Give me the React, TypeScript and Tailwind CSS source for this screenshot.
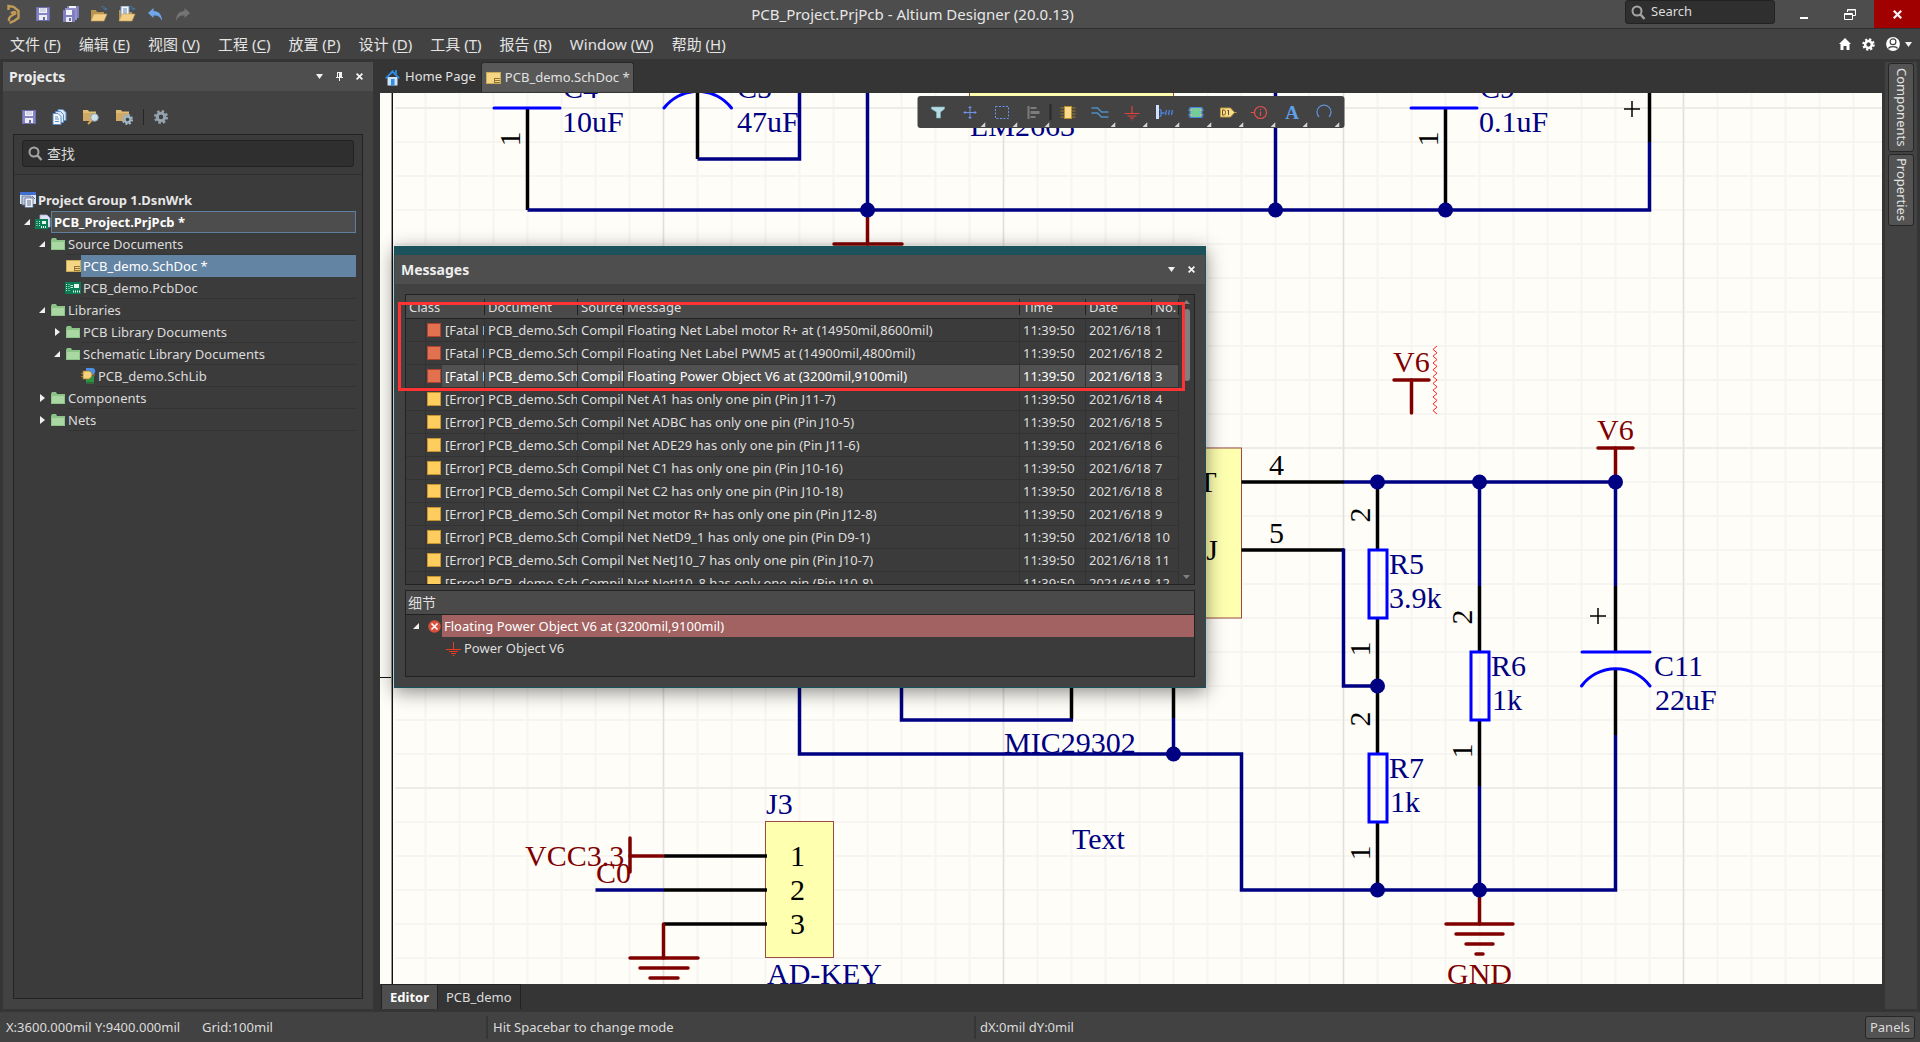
import React from "react";

const NAVY = "#000082";
const BLUE = "#0000ff";
const MAROON = "#800000";

/* ---------- small icons ---------- */

function FloppyIcon() {
  return (
    <svg width="14" height="14" viewBox="0 0 14 14">
      <rect width="14" height="14" fill="#8585c4" />
      <rect x="3" y="0" width="8" height="6" fill="#f3f3fa" />
      <path d="M4 2h6M4 4h6" stroke="#b9b9d8" />
      <rect x="3" y="8" width="8" height="6" fill="#ececf6" />
      <rect x="7" y="10" width="2" height="3" fill="#6a6aa8" />
      <rect x="0.5" y="0.5" width="13" height="13" fill="none" stroke="#6f6fb0" />
    </svg>
  );
}

function FloppiesIcon() {
  return (
    <svg width="16" height="16" viewBox="0 0 16 16">
      <rect x="4" y="0" width="12" height="12" fill="#7d7dbd" />
      <rect x="6" y="0" width="7" height="4" fill="#f3f3fa" />
      <rect x="2" y="2" width="12" height="12" fill="#9292cc" />
      <rect x="0" y="4" width="12" height="12" fill="#8080c0" />
      <rect x="3" y="4" width="6" height="5" fill="#f3f3fa" />
      <rect x="3" y="11" width="6" height="5" fill="#ececf6" />
      <rect x="6" y="12" width="2" height="3" fill="#6a6aa8" />
    </svg>
  );
}

function OpenFolderIcon({ doc = false }: { doc?: boolean }) {
  return (
    <svg width="18" height="16" viewBox="0 0 18 16">
      <path d="M1 4h5l1 2h7v9H1z" fill="#b99350" />
      {doc && (
        <g>
          <rect x="3" y="0" width="8" height="11" fill="#f2f5fa" stroke="#7b98bd" />
          <path d="M5 3h4M5 5h4M5 7h4" stroke="#5f86b5" />
        </g>
      )}
      <path d="M4 8h13l-3 7H1z" fill="#f3cf85" stroke="#c79e55" strokeWidth="0.6" />
      <path d="M11 1.500c2-1.500 4-1 4.500 2M13.500 2.500l2 1.500 1.500-2" fill="none" stroke="#3f7fae" strokeWidth="1" />
    </svg>
  );
}

function ArrowIcon({ flip = false, color }: { flip?: boolean; color: string }) {
  return (
    <svg width="16" height="13" viewBox="0 0 16 13">
      <path
        d={flip ? "M15 5L9.500 0v3C4 3 1 7 1 13c1.500-4 4-6 8.500-5.500V10z" : "M1 5L6.500 0v3C12 3 15 7 15 13c-1.500-4-4-6-8.500-5.500V10z"}
        fill={color}
      />
    </svg>
  );
}

function AltiumLogo() {
  return (
    <svg width="15" height="20" viewBox="0 0 15 20" fill="none" stroke="#c09b57" strokeWidth="2.400">
      <path d="M2.500 6V2l5 .8 5 4v7l-4 3-5 2" />
      <path d="M5 9.500c2-2 4.500-2 4.500-.5 0 2-5 1.500-6.500 5.500v2.500" />
    </svg>
  );
}

function SearchGlyph() {
  return (
    <svg width="15" height="15" viewBox="0 0 15 15" fill="none" stroke="#a5a5a5">
      <circle cx="6" cy="6" r="4.500" strokeWidth="2" />
      <path d="M9.500 9.500l4 4.500" strokeWidth="2.500" />
    </svg>
  );
}

function DocsIcon() {
  return (
    <svg width="15" height="16" viewBox="0 0 15 16">
      <path d="M6 .5h5l3 3v8H6z" fill="#dbe9f7" stroke="#5b8fc4" />
      <path d="M3.500 2.500h5l3 3v8h-8z" fill="#dbe9f7" stroke="#5b8fc4" />
      <path d="M1 4.500h5l3 3v8H1z" fill="#f4f8fc" stroke="#5b8fc4" />
      <path d="M3 8h3M3 10h4M3 12.500h4" stroke="#5b8fc4" />
    </svg>
  );
}

function GearShape({ cx, cy, r, color, hole }: { cx: number; cy: number; r: number; color: string; hole: string }) {
  return (
    <g>
      <circle cx={cx} cy={cy} r={r} fill="none" stroke={color} strokeWidth={r * 0.5} strokeDasharray={`${r * 0.42} ${r * 0.365}`} />
      <circle cx={cx} cy={cy} r={r * 0.66} fill="none" stroke={color} strokeWidth={r * 0.55} />
      <circle cx={cx} cy={cy} r={r * 0.38} fill={hole} />
    </g>
  );
}

function FolderToolIcon({ kind }: { kind: "search" | "gear" }) {
  return (
    <svg width="17" height="16" viewBox="0 0 17 16">
      <path d="M0 1h5l1 1.500h7V12H0z" fill="#e0bd74" />
      <path d="M0 4h13v8H0z" fill="#cfa965" />
      {kind === "search" ? (
        <g>
          <path d="M9 11l-4 4" stroke="#d8a650" strokeWidth="2" />
          <circle cx="11.500" cy="8.500" r="3.800" fill="#cfe0ea" stroke="#8ba6b6" />
        </g>
      ) : (
        <GearShape cx={11.5} cy={10.5} r={4.5} color="#9fb4c4" hole="#424242" />
      )}
    </svg>
  );
}

function HomePageIcon() {
  return (
    <svg width="15" height="17" viewBox="0 0 15 17">
      <rect x="10" y="1" width="2" height="4" fill="#2b7fd0" />
      <path d="M2.500 8h10v8.500h-10z" fill="#cfe4f7" />
      <path d="M0 9L7.500 1 15 9l-1.500.8L7.500 4 1.500 9.800z" fill="#2f8fe8" />
      <rect x="6" y="10" width="3.500" height="6.500" fill="#2f8fe8" />
    </svg>
  );
}

function SchDocIcon() {
  return (
    <svg width="15" height="12" viewBox="0 0 15 12">
      <rect x="0.500" y="0.500" width="14" height="11" fill="#f5d684" stroke="#cda95a" />
      <path d="M8 6.500h6M8 8.500h6M8 10.500h6" stroke="#8f7434" />
      <path d="M8.500 6v5" stroke="#8f7434" />
    </svg>
  );
}

function PcbDocIcon() {
  return (
    <svg width="16" height="12" viewBox="0 0 16 12">
      <rect width="16" height="12" fill="#0a7d55" />
      <path d="M1.500 2v8M4 2v8" stroke="#bff0d8" strokeWidth="1" strokeDasharray="1 1" />
      <path d="M5.500 3.500H8M5.500 5.500H8" stroke="#bff0d8" />
      <rect x="9" y="2" width="5" height="4" fill="#e6f7ef" />
      <path d="M8 9.500h7" stroke="#e6f7ef" strokeWidth="2" strokeDasharray="1 1" />
    </svg>
  );
}

function ProjectIcon() {
  return (
    <svg width="16" height="16" viewBox="0 0 16 16">
      <path d="M5 1h7l3 3v9H5z" fill="#dfe3f3" stroke="#a7aed0" strokeWidth="0.8" />
      <rect x="0" y="5" width="13" height="10" fill="#0a7d55" />
      <path d="M2 7v6M4.500 7v6" stroke="#bff0d8" strokeDasharray="1 1" />
      <rect x="7" y="7" width="4" height="3" fill="#e6f7ef" />
      <path d="M6 13h6" stroke="#e6f7ef" strokeWidth="2" strokeDasharray="1 1" />
    </svg>
  );
}

function GroupIcon() {
  return (
    <svg width="16" height="16" viewBox="0 0 16 16">
      <rect width="16" height="12" fill="#dfe6f2" />
      <rect width="16" height="3" fill="#3f6fd0" />
      <path d="M2 4h9v9H2z" fill="#b8c6dc" stroke="#5d6f92" strokeWidth="0.8" />
      <path d="M5 6h8v9.500H5z" fill="#eef2f8" stroke="#5d6f92" strokeWidth="0.8" />
      <path d="M7 9h4M7 11h4M7 13h4M12 4l3 3" stroke="#5d6f92" />
    </svg>
  );
}

function FolderIcon() {
  return (
    <svg width="14" height="12" viewBox="0 0 14 12">
      <path d="M0 2l1-2h4l1 2h8v10H0z" fill="#8cc487" />
      <path d="M1 4h12v7H1z" fill="#a9d8a2" />
    </svg>
  );
}

function SchLibIcon() {
  return (
    <svg width="15" height="16" viewBox="0 0 15 16">
      <path d="M5 0h7c3 1 3 5 0 7H5z" fill="#4b8fe6" />
      <path d="M5 8h8v6H5z" fill="#2f9440" />
      <path d="M6 14v2M8 14v2M10 14v2M12 14v2" stroke="#2f9440" />
      <path d="M0 5.500h3M0 8.500h3M10 7h4" stroke="#a07a2b" />
      <path d="M2 3h6c4 1 4 6 0 8H2z" fill="#f5d27b" stroke="#a07a2b" strokeWidth="0.8" />
    </svg>
  );
}

function Caret({ open }: { open: boolean }) {
  return open ? (
    <svg width="6" height="6" viewBox="0 0 6 6">
      <path d="M6 0v6H0z" fill="#f0f0f0" />
    </svg>
  ) : (
    <svg width="5" height="8" viewBox="0 0 5 8">
      <path d="M0 0l5 4-5 4z" fill="#f0f0f0" />
    </svg>
  );
}

function DownTri() {
  return (
    <svg width="7" height="5" viewBox="0 0 7 5">
      <path d="M0 0h7L3.500 5z" fill="#f2f2f2" />
    </svg>
  );
}

function CrossIcon({ size = 7 }: { size?: number }) {
  return (
    <svg width={size} height={size} viewBox="0 0 8 8" stroke="#f5f5f5" strokeWidth="2">
      <path d="M.7.7l6.600 6.600M7.300.7L.7 7.300" />
    </svg>
  );
}

function PinIcon() {
  return (
    <svg width="7" height="9" viewBox="0 0 7 9">
      <path d="M1 0h5v5h1v1H0V5h1z" fill="#f2f2f2" />
      <path d="M3.500 6v3" stroke="#f2f2f2" />
      <path d="M2.500 1v4" stroke="#4e4e4e" />
    </svg>
  );
}

/* ---------- header ---------- */

const QUICK_ACTIONS: { name: string; icon: React.ReactNode }[] = [
  { name: "Save", icon: <FloppyIcon /> },
  { name: "Save all", icon: <FloppiesIcon /> },
  { name: "Open", icon: <OpenFolderIcon /> },
  { name: "Open project", icon: <OpenFolderIcon doc /> },
  { name: "Undo", icon: <ArrowIcon color="#6ea6ea" /> },
  { name: "Redo", icon: <ArrowIcon flip color="#747474" /> },
];

function TitleBar() {
  return (
    <header className="flex h-[29px] shrink-0 items-center border-b border-[#2f2f2f] bg-[#4d4d4d] pl-[6px]">
      <div className="flex w-[194px] items-center">
        <AltiumLogo />
        <div className="ml-2 flex">
          {QUICK_ACTIONS.map((a) => (
            <button key={a.name} aria-label={a.name} className="flex h-5 w-7 items-center justify-center">{a.icon}</button>
          ))}
        </div>
      </div>
      <h1 className="flex-1 text-center text-[15px] leading-5 text-[#e6e6e6]">PCB_Project.PrjPcb - Altium Designer (20.0.13)</h1>
      <label className="mb-1 flex h-6 w-[150px] items-center gap-[5px] rounded-[3px] border border-[#222] bg-[#2f2f2f] pl-[5px]">
        <SearchGlyph />
        <input aria-label="Search" placeholder="Search" className="w-[110px] bg-transparent text-[13px] text-[#ddd] outline-none placeholder:text-[#dcdcdc]" />
      </label>
      <div className="ml-[7px] flex h-full">
        <button aria-label="Minimize" className="flex w-[46px] items-center justify-center pr-[3px] pt-2"><span className="h-[2px] w-2 bg-white" /></button>
        <button aria-label="Restore" className="flex w-[46px] items-center justify-center pr-[3px]">
          <svg width="12" height="11" viewBox="0 0 12 11" fill="none" stroke="#fff" strokeWidth="1">
            <path d="M3.500 3V.5h8v6H9" /><path d="M3 1h9" />
            <path d="M.5 4.500h8v6h-8zM.5 5.500h8" />
          </svg>
        </button>
        <button aria-label="Close" className="flex w-[46px] items-center justify-center bg-[#a00000]"><CrossIcon size={9} /></button>
      </div>
    </header>
  );
}

const MENUS: [string, string][] = [
  ["文件", "F"], ["编辑", "E"], ["视图", "V"], ["工程", "C"], ["放置", "P"],
  ["设计", "D"], ["工具", "T"], ["报告", "R"], ["Window", "W"], ["帮助", "H"],
];

function MenuBar() {
  return (
    <nav className="flex h-[30px] shrink-0 items-center bg-[#424242] pl-[10px] pr-[8px] text-[15px] text-[#e4e4e4]">
      <div className="flex flex-1 gap-[18px]">
        {MENUS.map(([name, key]) => (
          <button key={name} className="whitespace-nowrap">
            {name} (<span className="underline underline-offset-2">{key}</span>)
          </button>
        ))}
      </div>
      <div className="flex items-center gap-[11px]">
        <button aria-label="Home">
          <svg width="12" height="12" viewBox="0 0 12 12" fill="#fff"><path d="M6 0l6 6h-1.500v6H7.500V8h-3v4H1.500V6H0z" /></svg>
        </button>
        <button aria-label="Settings">
          <svg width="13" height="13" viewBox="0 0 13 13"><GearShape cx={6.5} cy={6.5} r={5} color="#fff" hole="#424242" /></svg>
        </button>
        <button aria-label="Account" className="flex items-center gap-[5px]">
          <svg width="14" height="14" viewBox="0 0 14 14">
            <circle cx="7" cy="7" r="6.900" fill="#fff" />
            <circle cx="7" cy="4.800" r="2.900" fill="#fff" stroke="#424242" strokeWidth="1.200" />
            <path d="M2.500 11.500c1-2.500 8-2.500 9 0" fill="none" stroke="#424242" strokeWidth="1.200" />
          </svg>
          <DownTri />
        </button>
      </div>
    </nav>
  );
}

/* ---------- projects panel ---------- */

type Node = { label: string; depth: 0 | 1 | 2 | 3 | 4; icon: React.ReactNode; open?: boolean; style?: "bold" | "focus" | "selected" };

const NODES: Node[] = [
  { label: "Project Group 1.DsnWrk", depth: 0, icon: <GroupIcon />, style: "bold" },
  { label: "PCB_Project.PrjPcb *", depth: 1, icon: <ProjectIcon />, open: true, style: "focus" },
  { label: "Source Documents", depth: 2, icon: <FolderIcon />, open: true },
  { label: "PCB_demo.SchDoc *", depth: 3, icon: <SchDocIcon />, style: "selected" },
  { label: "PCB_demo.PcbDoc", depth: 3, icon: <PcbDocIcon /> },
  { label: "Libraries", depth: 2, icon: <FolderIcon />, open: true },
  { label: "PCB Library Documents", depth: 3, icon: <FolderIcon />, open: false },
  { label: "Schematic Library Documents", depth: 3, icon: <FolderIcon />, open: true },
  { label: "PCB_demo.SchLib", depth: 4, icon: <SchLibIcon /> },
  { label: "Components", depth: 2, icon: <FolderIcon />, open: false },
  { label: "Nets", depth: 2, icon: <FolderIcon />, open: false },
];

const INDENT = ["-ml-[10px]", "ml-[5px]", "ml-5", "ml-[35px]", "ml-[50px]"];

const NODE_STYLE = {
  plain: "border-b border-[#333333] text-[#dcdcdc]",
  bold: "font-bold text-[#e6e6e6]",
  focus: "border border-[#5f7f9f] bg-[#4d4d4d] font-bold text-white",
  selected: "bg-[#6484a4] text-white",
};

function ProjectsPanel() {
  return (
    <aside className="flex w-[370px] shrink-0 flex-col bg-[#424242]">
      <div className="flex h-[29px] items-center bg-[#4e4e4e] pl-[6px] pr-[10px]">
        <h2 className="flex-1 text-[14px] font-bold text-[#ededed]">Projects</h2>
        <div className="flex items-center gap-[13px]">
          <button aria-label="Panel menu"><DownTri /></button>
          <button aria-label="Pin"><PinIcon /></button>
          <button aria-label="Close panel"><CrossIcon /></button>
        </div>
      </div>
      <div className="flex h-[43px] items-center gap-4 pl-[19px] pt-2">
        <button aria-label="Save document"><FloppyIcon /></button>
        <button aria-label="Documents"><DocsIcon /></button>
        <button aria-label="Find"><FolderToolIcon kind="search" /></button>
        <button aria-label="Project options"><FolderToolIcon kind="gear" /></button>
        <span className="-mx-1.5 h-4 w-px bg-[#262626]" />
        <button aria-label="Panel settings">
          <svg width="14" height="14" viewBox="0 0 14 14"><GearShape cx={7} cy={7} r={5.6} color="#94a3ad" hole="#424242" /></svg>
        </button>
      </div>
      <div className="mx-[10px] mb-[10px] flex flex-1 flex-col border border-[#222] bg-[#3b3b3b]">
        <div className="border-b border-[#303030] px-2 pb-[7px] pt-[5px]">
          <label className="flex h-[27px] items-center gap-1 rounded-[3px] border border-[#222] bg-[#2f2f2f] pl-[5px]">
            <SearchGlyph />
            <input aria-label="查找" placeholder="查找" className="flex-1 bg-transparent text-[14px] outline-none placeholder:text-[#d8d8d8]" />
          </label>
        </div>
        <div role="tree" className="pr-[6px] pt-[14px] text-[13px]">
          {NODES.map((n) => (
            <div key={n.label} role="treeitem" className="flex h-[22px]">
              <span className={`flex w-4 shrink-0 items-center justify-center ${INDENT[n.depth]}`}>
                {n.open !== undefined && <Caret open={n.open} />}
              </span>
              <span className="flex w-4 shrink-0 items-center justify-center">{n.icon}</span>
              <span className={`flex flex-1 items-center whitespace-nowrap pl-[2px] pt-[2px] ${NODE_STYLE[n.style ?? "plain"]}`}>{n.label}</span>
            </div>
          ))}
        </div>
      </div>
    </aside>
  );
}

/* ---------- schematic ---------- */

type Pt = [number, number];
const line = (pts: Pt[]) => pts.map((p) => p.join(",")).join(" ");

const WIRES: Pt[][] = [
  [[697.5, 159], [799.5, 159], [799.5, 90]],
  [[527.5, 210], [1649.5, 210], [1649.5, 142]],
  [[867.5, 90], [867.5, 210]],
  [[1275.5, 90], [1275.5, 210]],
  [[1343.5, 482], [1615.5, 482], [1615.5, 586]],
  [[1343.5, 548.5], [1343.5, 686], [1377.5, 686]],
  [[1479.5, 482], [1479.5, 586]],
  [[1479.5, 786], [1479.5, 890]],
  [[799.5, 660], [799.5, 754], [1241.5, 754], [1241.5, 890], [1615.5, 890], [1615.5, 735]],
  [[901.5, 660], [901.5, 720], [1073, 720]],
  [[1173.5, 718], [1173.5, 754]],
  [[595.5, 890], [664, 890]],
];

const PINS: Pt[][] = [
  [[527.5, 108], [527.5, 210]],
  [[697.5, 90], [697.5, 159]],
  [[1445.5, 108], [1445.5, 210]],
  [[1649.5, 90], [1649.5, 142]],
  [[1241.5, 482], [1344, 482]],
  [[1241.5, 550], [1344, 550]],
  [[1377.5, 482], [1377.5, 550]],
  [[1377.5, 618], [1377.5, 754]],
  [[1377.5, 822], [1377.5, 890]],
  [[1479.5, 586], [1479.5, 652]],
  [[1479.5, 720], [1479.5, 786]],
  [[1615.5, 586], [1615.5, 652]],
  [[1615.5, 669], [1615.5, 735]],
  [[1071.5, 660], [1071.5, 719]],
  [[1173.5, 660], [1173.5, 718]],
  [[664, 856], [767, 856]],
  [[664, 890], [767, 890]],
  [[664, 924], [767, 924]],
];

const POWER: Pt[][] = [
  [[867.5, 210], [867.5, 244]], [[834, 244], [902, 244]],
  [[1394, 380], [1429, 380]], [[1411.5, 380], [1411.5, 413]],
  [[1598, 448], [1633, 448]], [[1615.5, 448], [1615.5, 480]],
  [[1479.5, 890], [1479.5, 924]],
  [[1446, 924], [1513, 924]], [[1456, 934], [1503, 934]], [[1466, 944], [1493, 944]], [[1476, 954], [1483, 954]],
  [[630, 838], [630, 872]], [[630, 856], [663, 856]],
  [[663.5, 924], [663.5, 958]],
  [[630, 958], [698, 958]], [[640, 968], [688, 968]], [[650, 978], [678, 978]],
];

const DOTS: Pt[] = [
  [867.5, 210], [1275.5, 210], [1445.5, 210], [1377.5, 482], [1479.5, 482], [1615.5, 482],
  [1377.5, 686], [1173.5, 754], [1377.5, 890], [1479.5, 890],
];

const LABELS: [string, number, number, string][] = [
  ["C4", 563, 98, NAVY], ["10uF", 562, 132, NAVY],
  ["C5", 737, 98, NAVY], ["47uF", 737, 132, NAVY],
  ["LM2663", 970, 136, NAVY],
  ["C9", 1480, 98, NAVY], ["0.1uF", 1479, 132, NAVY],
  ["V6", 1393, 372, MAROON], ["V6", 1597, 440, MAROON],
  ["OUT", 1155, 492, "#000"], ["ADJ", 1163, 560, "#000"],
  ["4", 1269, 475, "#000"], ["5", 1269, 543, "#000"],
  ["R5", 1389, 574, NAVY], ["3.9k", 1389, 608, NAVY],
  ["R6", 1491, 676, NAVY], ["1k", 1492, 710, NAVY],
  ["R7", 1389, 778, NAVY], ["1k", 1390, 812, NAVY],
  ["C11", 1654, 676, NAVY], ["22uF", 1655, 710, NAVY],
  ["MIC29302", 1004, 753, NAVY], ["Text", 1072, 849, NAVY],
  ["J3", 766, 814, NAVY], ["AD-KEY", 767, 984, NAVY],
  ["1", 790, 866, "#000"], ["2", 790, 900, "#000"], ["3", 790, 934, "#000"],
  ["VCC3.3", 525, 866, MAROON], ["C0", 596, 883, MAROON], ["GND", 1447, 984, MAROON],
];

const PIN_NUMBERS: [string, number, number][] = [
  ["1", 520, 139], ["1", 1438, 139], ["2", 1370, 515], ["1", 1370, 649], ["2", 1472, 617],
  ["1", 1472, 751], ["2", 1370, 719], ["1", 1370, 853],
];

const ZIGZAG = Array.from({ length: 21 }, (_, i) => `${i % 2 ? 1433 : 1437},${346 + i * 3.4}`).join(" ");

function Schematic() {
  return (
    <svg className="absolute inset-0 h-full w-full" role="img" aria-label="Schematic sheet">
      <g transform="translate(-380 -93)">
        <g stroke="#f6f5f2" strokeWidth="2">
          {Array.from({ length: 44 }, (_, i) => 425.5 + i * 34).map((x) => (
            <path key={x} d={`M${x} 93V1000`} />
          ))}
          {Array.from({ length: 27 }, (_, i) => 108 + i * 34).map((y) => (
            <path key={y} d={`M395 ${y}H1900`} />
          ))}
        </g>
        <g stroke="#e2e1de" strokeWidth="1.500">
          {[663.5, 1003.5, 1343.5, 1683.5].map((x) => (
            <path key={x} d={`M${x} 93V1000`} />
          ))}
          {[108, 448, 788].map((y) => (
            <path key={y} d={`M395 ${y}H1900`} stroke="#e9e8e4" />
          ))}
        </g>
        <path d="M392.500 93V1000M380 677.500H392" stroke="#111" />
        <path d="M391.500 93V1000" stroke="#999" />

        <g fill="#ffffb0" stroke="#9c4a44">
          <rect x="969.500" y="60" width="204" height="46" />
          <rect x="1037.500" y="448" width="204" height="170" />
          <rect x="765.500" y="821.500" width="68" height="136" />
        </g>

        <g fill="none" strokeWidth="3.500">
          {PINS.map((p, i) => <polyline key={i} points={line(p)} stroke="#000" />)}
          {WIRES.map((p, i) => <polyline key={i} points={line(p)} stroke={NAVY} />)}
          {POWER.map((p, i) => <polyline key={i} points={line(p)} stroke={MAROON} strokeLinecap="round" />)}
        </g>
        <g fill="none" stroke={BLUE} strokeWidth="3" strokeLinecap="round">
          <path d="M494 108h66M1411 108h66M1582 652h68" />
          <path d="M664 108A42.500 42.500 0 0 1 731.500 108M1581.500 686A42.500 42.500 0 0 1 1650 686" />
          <rect x="1369" y="550" width="18" height="68" />
          <rect x="1471" y="652" width="18" height="68" />
          <rect x="1369" y="754" width="18" height="68" />
        </g>
        <path d="M1624 109h16M1632 101v16M1590 616h16M1598 608v16" stroke="#000" strokeWidth="1.500" />
        <polyline points={ZIGZAG} fill="none" stroke="#ff2020" />
        {DOTS.map(([x, y]) => <circle key={`${x}-${y}`} cx={x} cy={y} r="7.500" fill={NAVY} />)}

        <g fontFamily="'Liberation Serif', serif" fontSize="30">
          {LABELS.map(([t, x, y, c]) => (
            <text key={`${t}-${x}-${y}`} x={x} y={y} fill={c}>{t}</text>
          ))}
          {PIN_NUMBERS.map(([t, x, y]) => (
            <text key={`${x}-${y}`} transform={`translate(${x} ${y}) rotate(-90)`} textAnchor="middle">{t}</text>
          ))}
        </g>
      </g>
    </svg>
  );
}

/* ---------- floating toolbar ---------- */

const TOOLS: { name: string; menu: boolean; art: React.ReactNode }[] = [
  { name: "Filter", menu: false, art: <path d="M3 4h13v2l-4 3v6H8V9L3 6z" fill="#b5dbe4" stroke="#7fb3c4" strokeWidth="0.6" /> },
  { name: "Move", menu: true, art: <path d="M3 9.500h13M9.500 3v13M4.500 8v3M14.500 8v3M8 4.500h3M8 14.500h3" stroke="#6d95e6" fill="none" /> },
  { name: "Select", menu: true, art: <path d="M3 3.500h13v12H3z" fill="none" stroke="#6d95e6" strokeDasharray="2 1.500" /> },
  { name: "Align", menu: true, art: <g fill="#7c7c7c"><path d="M3 3h2v13H3zM6 4h6v2H6zM6 8h9v3H6zM6 13h5v2H6z" /></g> },
  { name: "Part", menu: false, art: <g><path d="M2 5h15M2 8h15M2 11h15M2 14h15" stroke="#a07f2b" /><rect x="6" y="3.500" width="7" height="12" fill="#fadb90" stroke="#b8912f" /></g> },
  { name: "Wire", menu: true, art: <path d="M1 5h6l4 4h7M1 10h6l4 4h7" fill="none" stroke="#4f8fc4" strokeWidth="1.500" /> },
  { name: "Power port", menu: true, art: <path d="M9.500 3v8M2 10.500h15M5 13h9M7.500 15h4M9 17h1" stroke="#e0423f" fill="none" strokeWidth="1.200" /> },
  { name: "Harness", menu: true, art: <g><rect x="1.500" y="2" width="3" height="14" fill="#cfe2fb" /><path d="M5 6.500q2 0 1.500 3.500 .5 3.500-1.500 3.500M7 10h3M12 7l-1 5M15 7l-1 5M18 7l-1 5" fill="none" stroke="#4f83e0" strokeWidth="1.300" /></g> },
  { name: "Sheet symbol", menu: true, art: <g><rect x="3.500" y="4.500" width="12" height="10" fill="#72cf9a" stroke="#4f83e0" /><path d="M2 7h4M2 12h4M13 7h4M13 12h4" stroke="#4f83e0" strokeWidth="2.500" /><path d="M4 7h2M4 12h2M13 7h2M13 12h2" stroke="#f2e04a" strokeWidth="1.500" /></g> },
  { name: "Designator", menu: true, art: <g><path d="M2 5h10l4 4.500-4 4.500H2z" fill="#f7dc92" stroke="#c29a3a" /><path d="M4 7v5h1.500c2 0 2-5 0-5zM9 8l1-1v5" fill="none" stroke="#6b5114" /><path d="M16 9.500h2" stroke="#c29a3a" /></g> },
  { name: "Directive", menu: true, art: <g fill="none" stroke="#e0504c" strokeWidth="1.200"><circle cx="10" cy="9.500" r="6" /><path d="M0 9.500h4M10 8.500v4.500M10 6v1.300" /></g> },
  { name: "Text", menu: true, art: <text x="9.500" y="16" textAnchor="middle" fontSize="19" fontWeight="bold" fontFamily="'Liberation Serif', serif" fill="#5fa0ea">A</text> },
  { name: "Arc", menu: true, art: <path d="M4.500 14a7 7 0 1 1 10 0" fill="none" stroke="#5f8fd0" strokeWidth="1.300" /> },
];

function ActiveBar() {
  return (
    <div role="toolbar" className="absolute left-1/2 top-[3px] flex h-8 w-[427px] -translate-x-1/2 rounded-[3px] bg-[#434343] pl-1">
      {TOOLS.map((t, i) => (
        <React.Fragment key={t.name}>
          {i === 4 && <span className="mt-2 h-4 w-0.5 bg-[#2a2a2a]" />}
          <button aria-label={t.name} className="relative flex h-8 w-8 items-center justify-center">
            <svg width="19" height="19" viewBox="0 0 19 19">{t.art}</svg>
            {t.menu && (
              <svg className="absolute bottom-px right-0" width="5" height="5" viewBox="0 0 5 5"><path d="M5 0v5H0z" fill="#d5d5d5" /></svg>
            )}
          </button>
        </React.Fragment>
      ))}
    </div>
  );
}

/* ---------- messages window ---------- */

const MESSAGES: { fatal?: boolean; text: string }[] = [
  { fatal: true, text: "Floating Net Label motor R+ at (14950mil,8600mil)" },
  { fatal: true, text: "Floating Net Label PWM5 at (14900mil,4800mil)" },
  { fatal: true, text: "Floating Power Object V6 at (3200mil,9100mil)" },
  { text: "Net A1 has only one pin (Pin J11-7)" },
  { text: "Net ADBC has only one pin (Pin J10-5)" },
  { text: "Net ADE29 has only one pin (Pin J11-6)" },
  { text: "Net C1 has only one pin (Pin J10-16)" },
  { text: "Net C2 has only one pin (Pin J10-18)" },
  { text: "Net motor R+ has only one pin (Pin J12-8)" },
  { text: "Net NetD9_1 has only one pin (Pin D9-1)" },
  { text: "Net NetJ10_7 has only one pin (Pin J10-7)" },
  { text: "Net NetJ10_8 has only one pin (Pin J10-8)" },
];

const CELL = "overflow-hidden whitespace-nowrap border-b border-r border-[#333] p-0 pl-[3px] pt-px leading-[21px]";

function MessagesWindow() {
  return (
    <section className="absolute left-[14px] top-[153px] flex w-[812px] flex-col border border-t-[9px] border-[#1b525c] bg-[#424242] text-[13px] text-[#dedede] shadow-[0_4px_18px_rgba(0,0,0,0.45)]">
      <div className="flex h-[29px] items-center bg-[#4e4e4e] pl-[6px] pr-[10px]">
        <h2 className="flex-1 text-[14px] font-bold text-[#ededed]">Messages</h2>
        <div className="flex items-center gap-[13px]">
          <button aria-label="Window menu"><DownTri /></button>
          <button aria-label="Close messages"><CrossIcon /></button>
        </div>
      </div>
      <div className="mx-[10px] mt-[10px] flex h-[291px] overflow-hidden border border-[#222] bg-[#3b3b3b]">
        <div className="min-w-0 flex-1">
          <table className="w-full table-fixed border-separate border-spacing-0">
            <colgroup>
              <col className="w-5" /><col className="w-[59px]" /><col className="w-[93px]" /><col className="w-[46px]" />
              <col /><col className="w-[66px]" /><col className="w-[66px]" /><col className="w-[27px]" />
            </colgroup>
            <thead>
              <tr className="h-6 bg-[#4a4a4a] text-left">
                {["Class", "Document", "Source", "Message", "Time", "Date", "No."].map((h, i) => (
                  <th key={h} colSpan={i === 0 ? 2 : 1} className="h-6 overflow-hidden whitespace-nowrap border-b border-[#222] p-0 font-normal">
                    <span className="flex h-4 items-center border-r border-[#222] pl-[3px] pt-[2px]">{h}</span>
                  </th>
                ))}
              </tr>
            </thead>
            <tbody>
              {MESSAGES.map((m, i) => (
                <tr key={m.text} className={i === 2 ? "h-[23px] text-white" : "h-[23px]"}>
                  <td className="border-b border-r border-[#333] p-0" />
                  <td className="overflow-hidden whitespace-nowrap border-b border-r border-[#333] p-0 pl-px">
                    <span className="flex h-[22px] items-center">
                      <span className={m.fatal ? "h-[14px] w-[14px] shrink-0 border border-[#b04330] bg-[#e2714f]" : "h-[14px] w-[14px] shrink-0 border border-[#c79434] bg-[#ffcd5e]"} />
                      <span className={i === 2 ? "ml-px flex h-full w-[42px] shrink-0 items-center overflow-hidden bg-[#515151] pl-[3px] pt-px" : "ml-px w-[42px] shrink-0 overflow-hidden pl-[3px] pt-px"}>
                        {m.fatal ? "[Fatal Error]" : "[Error]"}
                      </span>
                    </span>
                  </td>
                  {["PCB_demo.SchDoc", "Compiler", m.text, "11:39:50", "2021/6/18", String(i + 1)].map((c, j) => (
                    <td key={j} className={i === 2 ? `${CELL} bg-[#515151]` : CELL}>{c}</td>
                  ))}
                </tr>
              ))}
            </tbody>
          </table>
        </div>
        <div className="flex w-[15px] shrink-0 flex-col items-center pb-[5px] pt-[5px]">
          <svg width="7" height="4" viewBox="0 0 7 4"><path d="M0 4h7L3.500 0z" fill="#808080" /></svg>
          <span className="mt-[5px] h-[72px] w-1.5 rounded-sm bg-[#808080]" />
          <span className="flex-1" />
          <svg width="7" height="4" viewBox="0 0 7 4"><path d="M0 0h7L3.500 4z" fill="#808080" /></svg>
        </div>
      </div>
      <div className="mx-[10px] mb-[10px] mt-[5px] h-[87px] border border-[#222] bg-[#3b3b3b]">
        <div className="flex h-6 items-center border-b border-[#222] bg-[#4a4a4a] pl-[2px] text-[14px]">细节</div>
        <div className="flex h-[22px] items-center">
          <span className="flex w-5 justify-center"><Caret open /></span>
          <span className="flex w-4 justify-center">
            <svg width="13" height="13" viewBox="0 0 13 13"><circle cx="6.500" cy="6.500" r="6.200" fill="#d8503c" /><path d="M3.500 3.500l6 6M9.500 3.500l-6 6" stroke="#fff" strokeWidth="1.600" /></svg>
          </span>
          <span className="flex h-full flex-1 items-center bg-[#a26261] pl-[2px] pt-[2px] text-white">Floating Power Object V6 at (3200mil,9100mil)</span>
        </div>
        <div className="flex h-[22px] items-center pl-10">
          <svg width="15" height="15" viewBox="0 0 15 15" stroke="#e83b22"><path d="M7.500 1v7M0 8.500h15M3 10.500h9M5 12.500h5M6.500 14.500h2" /></svg>
          <span className="pl-[3px] pt-[2px]">Power Object V6</span>
        </div>
      </div>
      <div className="pointer-events-none absolute left-[3px] top-[47px] h-[89px] w-[787px] border-3 border-[#ff3333]" />
    </section>
  );
}

/* ---------- page ---------- */

export default function App() {
  return (
    <div className="flex h-screen flex-col overflow-hidden bg-[#353535] font-['Noto_Sans','Noto_Sans_CJK_SC',sans-serif]">
      <TitleBar />
      <MenuBar />
      <main className="flex min-h-0 flex-1 px-[3px] py-[3px]">
        <ProjectsPanel />
        <div className="ml-[7px] flex min-w-0 flex-1 flex-col">
          <div className="flex h-[31px] items-start pl-[5px] text-[13px] text-[#e2e2e2]">
            <button className="flex h-[30px] items-center gap-[5px] pr-[5px]"><HomePageIcon />Home Page</button>
            <button className="flex h-[30px] items-center gap-1 rounded-t-[3px] border border-b-0 border-[#2a2a2a] bg-[#585858] pl-1 pr-[3px]">
              <SchDocIcon />PCB_demo.SchDoc *
            </button>
          </div>
          <div className="relative flex-1 overflow-hidden bg-[#fffdf8]">
            <Schematic />
            <ActiveBar />
            <MessagesWindow />
          </div>
          <div className="flex h-[25px] pl-px text-[13px]">
            <button className="border border-b-0 border-[#222] bg-[#4e4e4e] px-2 pt-0.5 font-bold text-white">Editor</button>
            <button className="border-r border-t border-[#222] px-2 pt-0.5 text-[#dcdcdc]">PCB_demo</button>
          </div>
        </div>
        <div className="ml-[3px] flex w-8 shrink-0 flex-col items-center gap-0.5 bg-[#424242] pt-px text-[13px] text-[#e2e2e2]">
          <button className="h-[89px] w-[26px] rounded-[3px] border border-[#262626] bg-[#535353] [writing-mode:vertical-rl]">Components</button>
          <button className="h-[72px] w-[26px] rounded-[3px] border border-[#262626] bg-[#535353] [writing-mode:vertical-rl]">Properties</button>
        </div>
      </main>
      <footer className="flex h-[30px] shrink-0 items-center bg-[#424242] pl-[6px] pr-[5px] pt-px text-[13px] text-[#dcdcdc]">
        <span className="w-[196px] whitespace-pre">X:3600.000mil Y:9400.000mil</span>
        <span className="w-[284px]">Grid:100mil</span>
        <span className="flex h-[23px] w-[488px] items-center border-l-2 border-[#363636] pl-[5px]">Hit Spacebar to change mode</span>
        <span className="flex h-[23px] flex-1 items-center border-l-2 border-[#363636] pl-1">dX:0mil dY:0mil</span>
        <button className="h-[23px] w-[50px] rounded-[3px] border border-[#262626] bg-[#535353]">Panels</button>
      </footer>
    </div>
  );
}
